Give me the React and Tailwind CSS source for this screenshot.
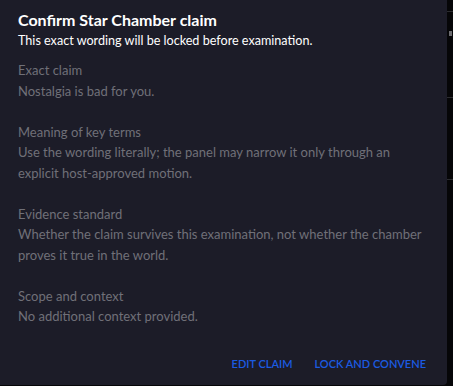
import React from "react";

const sections = [
  { label: "Exact claim", value: "Nostalgia is bad for you." },
  {
    label: "Meaning of key terms",
    value:
      "Use the wording literally; the panel may narrow it only through an explicit host-approved motion.",
  },
  {
    label: "Evidence standard",
    value:
      "Whether the claim survives this examination, not whether the chamber proves it true in the world.",
  },
  { label: "Scope and context", value: "No additional context provided." },
];

export default function App() {
  return (
    <div
      className="flex h-[386px] w-[453px] overflow-hidden bg-[#060608]"
      style={{ fontFamily: 'Lato, "Noto Sans", sans-serif' }}
    >
      <div className="flex h-[385px] w-[447px] shrink-0 flex-col rounded-br-[4px] bg-[#1c1c28] px-[18px] pt-[9px]">
        <h2 className="text-[16px] font-bold leading-[22px] text-white">
          Confirm Star Chamber claim
        </h2>
        <p className="text-[12.6px] leading-[20px] text-white">
          This exact wording will be locked before examination.
        </p>
        <div className="mt-[9px] flex flex-col gap-[20.5px] text-[13px] leading-[20.5px] text-[#707078]">
          {sections.map((s) => (
            <div key={s.label}>
              <div>{s.label}</div>
              <div>{s.value}</div>
            </div>
          ))}
        </div>
        <div className="mt-auto mb-[5px] -mr-[5px] flex justify-end gap-[6px]">
          <button className="px-[8px] py-[6px] text-[11px] font-semibold uppercase leading-[20px] text-[#1b5be2]">
            Edit claim
          </button>
          <button className="px-[8px] py-[6px] text-[11px] font-semibold uppercase leading-[20px] text-[#1b5be2]">
            Lock and convene
          </button>
        </div>
      </div>
      <div className="flex-1">
        <div className="mt-[11px] h-px bg-[#2c2c30]" />
        <div className="mt-[19px] h-[5px] w-[3px] ml-[2px] bg-[#6c6c70]" />
        <div className="mt-[61px] h-px bg-[#2c2c30]" />
        <div className="mt-[81px] h-px bg-[#2c2c30]" />
      </div>
    </div>
  );
}
